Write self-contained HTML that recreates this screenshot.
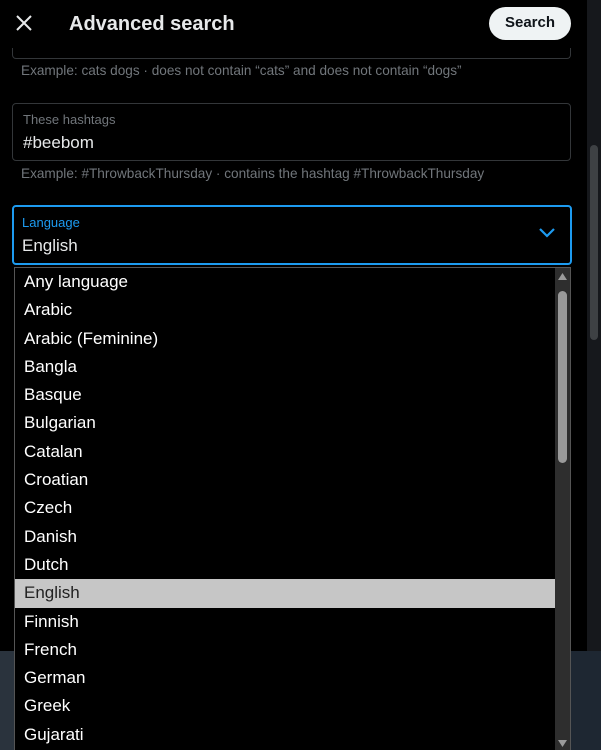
<!DOCTYPE html>
<html><head><meta charset="utf-8"><style>
*{margin:0;padding:0;box-sizing:border-box}
body{width:601px;height:750px;overflow:hidden;background:#1e2732;font-family:"Liberation Sans",sans-serif;position:relative}
.modal{position:absolute;left:0;top:0;width:601px;height:651px;background:#000;border-bottom-right-radius:12px}
.bgtext{position:absolute;left:0;top:651px;width:14px;height:99px;background:#2a333d}
.outsb{position:absolute;left:587px;top:0;width:14px;height:651px;background:#16181c}
.outthumb{position:absolute;left:590px;top:145px;width:8px;height:195px;background:#3e4144;border-radius:4px}
.hdr{position:absolute;left:0;top:0;width:587px;height:48px;background:#000}
.x{position:absolute;left:14px;top:13px;width:20px;height:20px}
.title{position:absolute;left:69px;top:13px;color:#e7e9ea;font-size:20px;font-weight:bold}
.btn{position:absolute;left:489px;top:7px;width:82px;height:33px;background:#eff3f4;border-radius:17px;color:#0f1419;font-weight:bold;font-size:15px;text-align:center;line-height:32px}
.box{position:absolute;left:12px;border:1px solid #333639;border-radius:4px}
.hint{position:absolute;left:21px;color:#71767b;font-size:13.6px}
.lab{position:absolute;left:10px;top:8px;font-size:13px;color:#71767b}
.val{position:absolute;left:10px;top:29px;font-size:17px;color:#e7e9ea}
.list{position:absolute;left:14px;top:267px;width:557px;height:483px;background:#000;border:1px solid #555;border-bottom:none;overflow:hidden}
.item{height:28.3px;line-height:28.3px;padding-left:9px;color:#fff;font-size:17px;width:541px}
.sel{background:#c6c6c6;color:#222}
.sb{position:absolute;right:0;top:0;width:15px;height:483px;background:#2e2e2e}
.thumb{position:absolute;left:3px;top:23px;width:9px;height:172px;background:#9a9a9a;border-radius:5px}
</style></head><body>
<div class="modal"></div>
<div class="bgtext"></div>
<div class="outsb"></div><div class="outthumb"></div>
<div class="box" style="top:30px;width:559px;height:29px;border-top:none"></div>
<div class="hint" style="top:63px">Example: cats dogs · does not contain “cats” and does not contain “dogs”</div>
<div class="box" style="top:103px;width:559px;height:58px"><div class="lab">These hashtags</div><div class="val">#beebom</div></div>
<div class="hint" style="top:166px">Example: #ThrowbackThursday · contains the hashtag #ThrowbackThursday</div>
<div class="box" style="top:205px;width:560px;height:60px;border:2px solid #1d9bf0"><div class="lab" style="color:#1d9bf0;top:8px;left:8px">Language</div><div class="val" style="left:8px;top:29px">English</div>
<svg style="position:absolute;left:524px;top:20px" width="18" height="12" viewBox="0 0 18 12"><path d="M2 2l7 7 7-7" stroke="#1d9bf0" stroke-width="2.2" fill="none"/></svg></div>
<div class="hdr"></div>
<svg class="x" viewBox="0 0 20 20"><path d="M3 3l14 14M17 3L3 17" stroke="#e7e9ea" stroke-width="2"/></svg>
<div class="title">Advanced search</div>
<div class="btn">Search</div>
<div class="list">
<div class="item">Any language</div><div class="item">Arabic</div><div class="item">Arabic (Feminine)</div><div class="item">Bangla</div><div class="item">Basque</div><div class="item">Bulgarian</div><div class="item">Catalan</div><div class="item">Croatian</div><div class="item">Czech</div><div class="item">Danish</div><div class="item">Dutch</div><div class="item sel">English</div><div class="item">Finnish</div><div class="item">French</div><div class="item">German</div><div class="item">Greek</div><div class="item">Gujarati</div>
<div class="sb"><svg style="position:absolute;left:3px;top:5px" width="9" height="7"><path d="M4.5 0L9 7H0z" fill="#9a9a9a"/></svg><div class="thumb"></div><svg style="position:absolute;left:3px;top:472px" width="9" height="7"><path d="M0 0h9L4.5 7z" fill="#9a9a9a"/></svg></div>
</div>
</body></html>
